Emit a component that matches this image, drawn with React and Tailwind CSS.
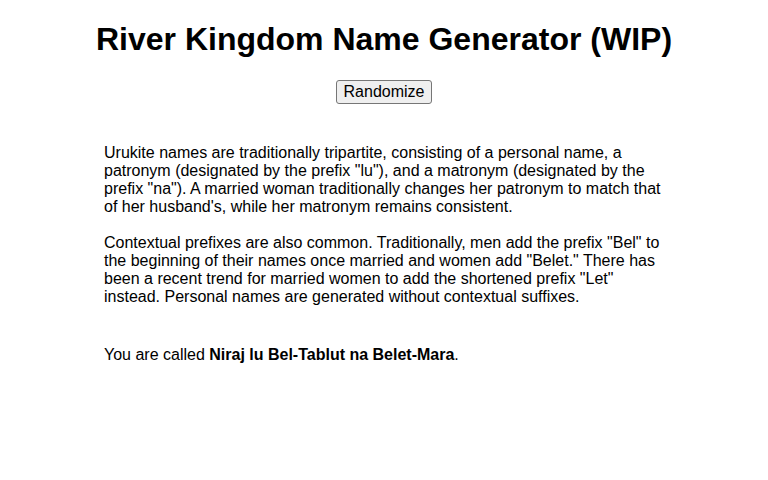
export default function App() {
  return (
    <div className="min-h-[480px] bg-white text-black" style={{ fontFamily: '"Liberation Sans", Arial, sans-serif' }}>
      <h1 className="pt-[21px] text-center text-[32px] font-bold leading-[37px]">
        River Kingdom Name Generator (WIP)
      </h1>
      <div className="mt-[22px] flex justify-center">
        <button className="h-[24px] rounded-[3px] border border-[#767676] bg-[#efefef] px-[7px] text-[16px] leading-[20px] text-black">
          Randomize
        </button>
      </div>
      <div className="mx-auto mt-[40px] w-[560px] text-[16px] leading-[18px]">
        <p>
          Urukite names are traditionally tripartite, consisting of a personal name, a patronym (designated by the prefix "lu"), and a matronym (designated by the prefix "na"). A married woman traditionally changes her patronym to match that of her husband's, while her matronym remains consistent.
        </p>
        <p className="mt-[18px]">
          Contextual prefixes are also common. Traditionally, men add the prefix "Bel" to the beginning of their names once married and women add "Belet." There has been a recent trend for married women to add the shortened prefix "Let" instead. Personal names are generated without contextual suffixes.
        </p>
        <p className="mt-[40px]">
          You are called <b>Niraj lu Bel-Tablut na Belet-Mara</b>.
        </p>
      </div>
    </div>
  );
}
